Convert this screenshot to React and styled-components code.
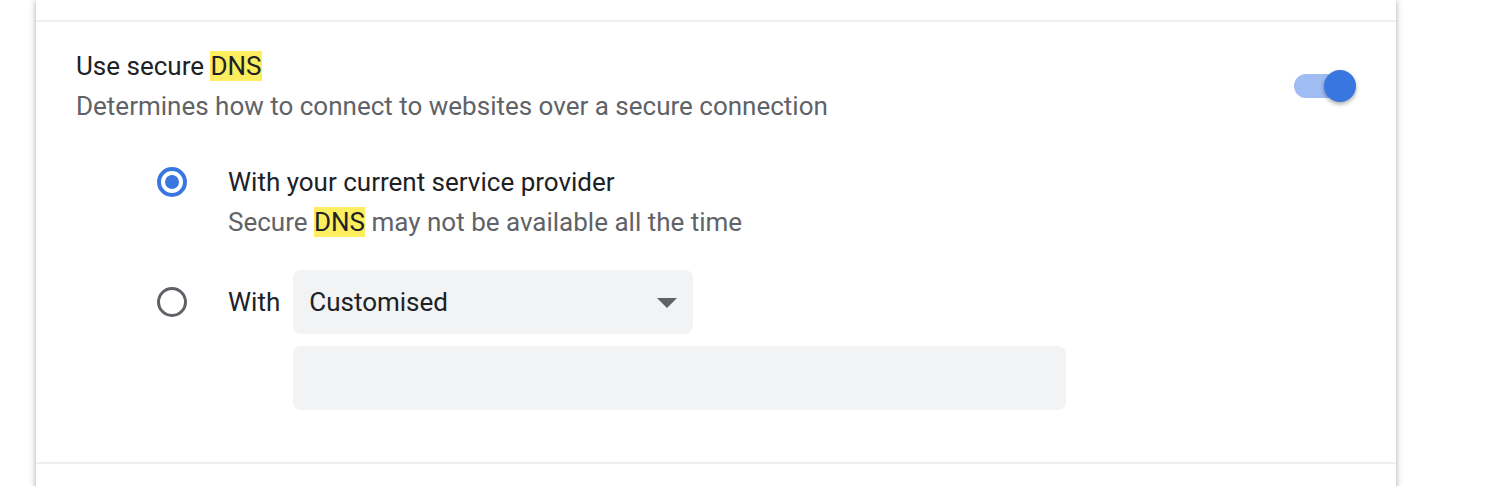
import React from "react";
import styled, { createGlobalStyle } from "styled-components";

const c_text = "#202124";
const c_secondary = "#5f6368";
const c_blue = "#3a76e0";
const c_field = "#f1f3f4";
const c_divider = "#efefef";
const c_highlight = "#fcee5f";

const GlobalStyle = createGlobalStyle`
  html, body {
    margin: 0;
    padding: 0;
    background: #ffffff;
  }
  body {
    font-family: Roboto, "Liberation Sans", Arial, sans-serif;
    -webkit-font-smoothing: antialiased;
  }
`;

const Page = styled.div`
  height: 486px;
  overflow: hidden;
  padding-left: 36px;
`;

const Card = styled.div`
  background: #ffffff;
  box-shadow: 0 2px 4px 0 rgba(60, 64, 67, 0.3),
    0 2px 6px 2px rgba(60, 64, 67, 0.15);
  width: 1360px;
  min-height: 520px;
`;

const PrevRowTail = styled.div`
  height: 20px;
`;

const Row = styled.div`
  border-top: 2px solid ${c_divider};
  border-bottom: 2px solid ${c_divider};
  padding: 24px 40px 52px;
`;

const Header = styled.div`
  align-items: center;
  display: flex;
  justify-content: space-between;
`;

const Texts = styled.div`
  display: flex;
  flex-direction: column;
`;

const Primary = styled.div`
  color: ${c_text};
  font-size: 26px;
  line-height: 40px;
`;

const Secondary = styled.div`
  color: ${c_secondary};
  font-size: 26px;
  line-height: 40px;
`;

const Mark = styled.span`
  background: ${c_highlight};
  color: ${c_text};
`;

const Toggle = styled.div`
  height: 32px;
  position: relative;
  width: 62px;
`;

const ToggleBar = styled.div`
  background: ${props => (props.checked ? "#9fbdf2" : "#bdc1c6")};
  border-radius: 12px;
  height: 24px;
  left: 0;
  position: absolute;
  top: 4px;
  width: 56px;
`;

const ToggleKnob = styled.div`
  background: ${props => (props.checked ? c_blue : "#ffffff")};
  border-radius: 50%;
  box-shadow: 0 2px 4px rgba(0, 0, 0, 0.35);
  height: 32px;
  position: absolute;
  right: 0;
  top: 0;
  width: 32px;
`;

const RadioGroup = styled.div`
  display: flex;
  flex-direction: column;
  gap: 28px;
  margin-top: 36px;
  padding-left: 80px;
`;

const Option = styled.div`
  align-items: flex-start;
  display: flex;
`;

const RadioBox = styled.div`
  align-items: center;
  display: flex;
  flex-shrink: 0;
  height: ${props => props.boxHeight}px;
  justify-content: center;
  margin-right: 40px;
  width: 32px;
`;

const Disc = styled.div`
  align-items: center;
  border: ${props => (props.checked ? `4px solid ${c_blue}` : `3.5px solid ${c_secondary}`)};
  border-radius: 50%;
  box-sizing: border-box;
  display: flex;
  height: 30px;
  justify-content: center;
  width: 30px;

  &::after {
    background: ${c_blue};
    border-radius: 50%;
    content: "";
    display: ${props => (props.checked ? "block" : "none")};
    height: 14px;
    width: 14px;
  }
`;

const Inline = styled.div`
  align-items: center;
  color: ${c_text};
  display: flex;
  font-size: 26px;
  height: 64px;
  margin-right: 13px;
`;

const Fields = styled.div`
  display: flex;
  flex-direction: column;
  gap: 12px;
`;

const Select = styled.div`
  align-items: center;
  background: ${c_field};
  border-radius: 8px;
  color: ${c_text};
  display: flex;
  font-size: 26px;
  height: 64px;
  justify-content: space-between;
  padding: 0 16px;
  width: 400px;
  box-sizing: border-box;
`;

const Arrow = styled.div`
  border-left: 10px solid transparent;
  border-right: 10px solid transparent;
  border-top: 10px solid ${c_secondary};
  height: 0;
  margin-top: 2px;
  width: 0;
`;

const Input = styled.div`
  background: ${c_field};
  border-radius: 8px;
  height: 64px;
  width: 773px;
`;

const Radio = ({ checked, boxHeight }) => (
  <RadioBox boxHeight={boxHeight}>
    <Disc checked={checked} />
  </RadioBox>
);

export default function App() {
  return (
    <>
      <GlobalStyle />
      <Page>
        <Card>
          <PrevRowTail />
          <Row>
            <Header>
              <Texts>
                <Primary>
                  Use secure <Mark>DNS</Mark>
                </Primary>
                <Secondary>
                  Determines how to connect to websites over a secure connection
                </Secondary>
              </Texts>
              <Toggle>
                <ToggleBar checked />
                <ToggleKnob checked />
              </Toggle>
            </Header>
            <RadioGroup>
              <Option>
                <Radio checked boxHeight={40} />
                <Texts>
                  <Primary>With your current service provider</Primary>
                  <Secondary>
                    Secure <Mark>DNS</Mark> may not be available all the time
                  </Secondary>
                </Texts>
              </Option>
              <Option>
                <Radio boxHeight={64} />
                <Inline>With</Inline>
                <Fields>
                  <Select>
                    <span>Customised</span>
                    <Arrow />
                  </Select>
                  <Input />
                </Fields>
              </Option>
            </RadioGroup>
          </Row>
        </Card>
      </Page>
    </>
  );
}
